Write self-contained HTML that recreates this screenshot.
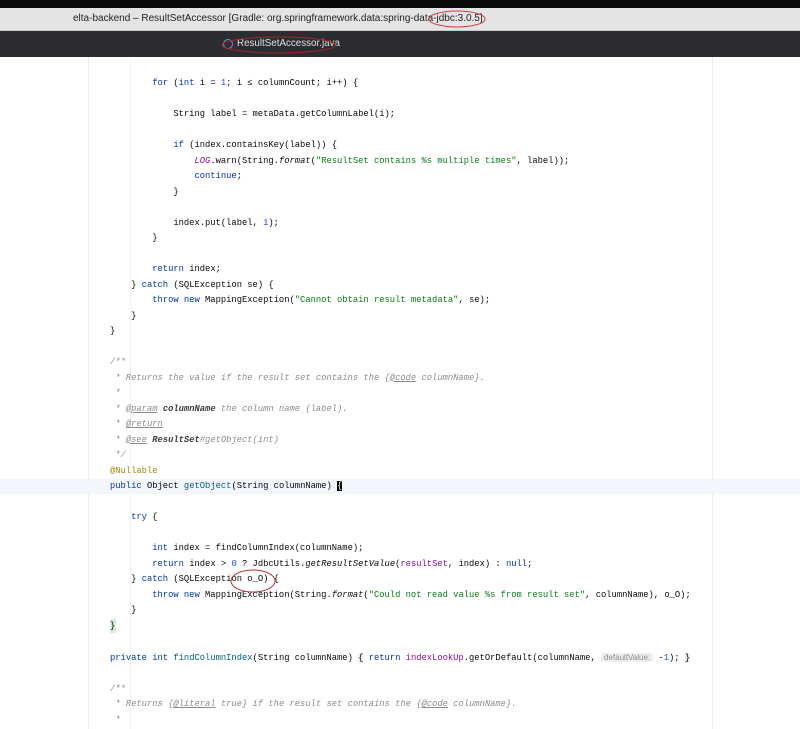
<!DOCTYPE html>
<html><head><meta charset="utf-8"><style>
html,body{margin:0;padding:0;width:800px;height:729px;overflow:hidden;background:#fff;font-family:"Liberation Sans",sans-serif}
#top{position:absolute;left:0;top:0;width:800px;height:8px;background:#0a0a0a}
#title{position:absolute;left:0;top:8px;width:800px;height:22px;background:#e4e4e4;border-bottom:1px solid #c8c8c8;font-size:10px;color:#222;line-height:22px}
#title span{position:absolute;left:73px}
#tabs{position:absolute;left:0;top:31px;width:800px;height:26px;background:#2b2d30;color:#dfe1e5;font-size:9.8px;line-height:26px}
#tabs span{position:absolute;left:237px}
#ic{position:absolute;left:223px;top:8px;width:10px;height:10px;border:1.5px solid #6f8ee8;border-radius:50%;box-sizing:border-box}
.vl{position:absolute;top:57px;bottom:0;width:1px;background:#ececec}
#hl{position:absolute;left:0;top:479px;width:800px;height:15px;background:#f3f6fd}
pre{position:absolute;left:110px;top:76px;margin:0;font-family:"Liberation Mono",monospace;font-size:8.8px;line-height:15.5px;color:#080808;letter-spacing:0}
.k{color:#0033b3}.s{color:#067d17}.c{color:#8c8c8c;font-style:italic}.m{color:#00627a}.a{color:#9e880d}.n{color:#1750eb}.f{color:#871094}.t{text-decoration:underline}.cb{color:#3c3c3c;font-weight:bold;font-style:italic}.it{font-style:italic}
.hint{background:#efefef;color:#888;font-family:"Liberation Sans",sans-serif;font-size:8px;padding:0 3px;border-radius:2px}
.g{background:#e8f2e8}
.cur{background:#000;color:#fff}
</style></head><body>
<div id="top"></div>
<div id="title"><span>elta-backend – ResultSetAccessor [Gradle: org.springframework.data:spring-data-jdbc:3.0.5]</span></div>
<div id="tabs"><div id="ic"></div><span>ResultSetAccessor.java</span></div>
<div class="vl" style="left:88px"></div>
<div class="vl" style="left:130px;background:#f2f2f2"></div>
<div class="vl" style="left:712px"></div>
<div id="hl"></div>
<div style="position:absolute;left:110px;top:619px;width:6px;height:14px;background:#d6ecd6"></div>
<pre>        <span class="k">for</span> (<span class="k">int</span> i = <span class="n">1</span>; i ≤ columnCount; i++) {

            String label = metaData.getColumnLabel(i);

            <span class="k">if</span> (index.containsKey(label)) {
                <span class="f it">LOG</span>.warn(String.<span class="it">format</span>(<span class="s">"ResultSet contains %s multiple times"</span>, label));
                <span class="k">continue</span>;
            }

            index.put(label, <span class="n">1</span>);
        }

        <span class="k">return</span> index;
    } <span class="k">catch</span> (SQLException se) {
        <span class="k">throw new</span> MappingException(<span class="s">"Cannot obtain result metadata"</span>, se);
    }
}

<span class="c">/**</span>
<span class="c"> * Returns the value if the result set contains the {<span class="t">@code</span> columnName}.</span>
<span class="c"> *</span>
<span class="c"> * <span class="t">@param</span> <span class="cb">columnName</span> the column name (label).</span>
<span class="c"> * <span class="t">@return</span></span>
<span class="c"> * <span class="t">@see</span> <span class="cb">ResultSet</span>#getObject(int)</span>
<span class="c"> */</span>
<span class="a">@Nullable</span>
<span class="k">public</span> Object <span class="m">getObject</span>(String columnName) <span class="cur">{</span>

    <span class="k">try</span> {

        <span class="k">int</span> index = findColumnIndex(columnName);
        <span class="k">return</span> index &gt; <span class="n">0</span> ? JdbcUtils.<span class="it">getResultSetValue</span>(<span class="f">resultSet</span>, index) : <span class="k">null</span>;
    } <span class="k">catch</span> (SQLException o_O) {
        <span class="k">throw new</span> MappingException(String.<span class="it">format</span>(<span class="s">"Could not read value %s from result set"</span>, columnName), o_O);
    }
}

<span class="k">private int</span> <span class="m">findColumnIndex</span>(String columnName) <span class="g">{</span> <span class="k">return</span> <span class="f">indexLookUp</span>.getOrDefault(columnName, <span class="hint">defaultValue:</span> -<span class="n">1</span>); <span class="g">}</span>

<span class="c">/**</span>
<span class="c"> * Returns {<span class="t">@literal</span> true} if the result set contains the {<span class="t">@code</span> columnName}.</span>
<span class="c"> *</span>
</pre>
<svg style="position:absolute;left:0;top:0" width="800" height="729">
<ellipse cx="457" cy="19" rx="28" ry="8" fill="none" stroke="#d04040" stroke-width="1"/>
<ellipse cx="279" cy="45" rx="57" ry="8" fill="none" stroke="#a02828" stroke-width="1"/>
<ellipse cx="253" cy="581" rx="22" ry="11" fill="none" stroke="#c03030" stroke-width="1"/>
</svg>
</body></html>
